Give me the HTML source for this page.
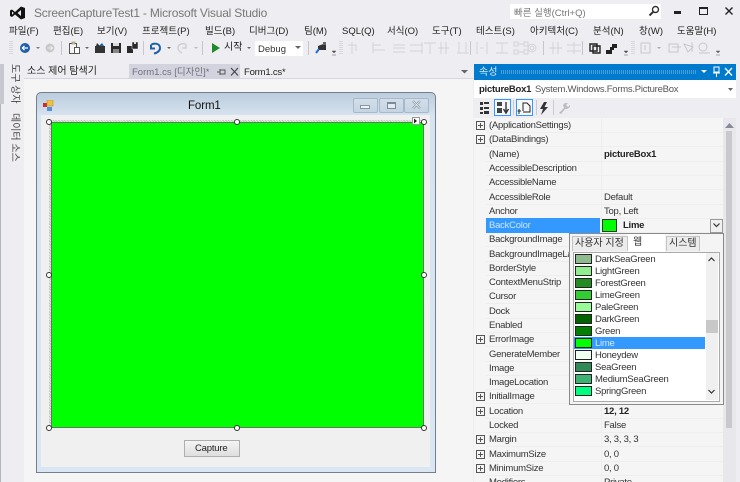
<!DOCTYPE html>
<html><head><meta charset="utf-8"><style>
html,body{margin:0;padding:0}
body{width:740px;height:482px;overflow:hidden;background:#eeeef2}
#r{position:relative;width:740px;height:482px;overflow:hidden;background:#eeeef2;font:10px "Liberation Sans","Noto Sans CJK KR",sans-serif;color:#1e1e1e;filter:blur(.3px)}
.b{position:absolute}
.t{position:absolute;white-space:nowrap;line-height:14px;height:14px}
.p{color:#333;font-size:9.500px;letter-spacing:-.25px;left:489px}
.v{color:#333;font-size:9.500px;letter-spacing:-.25px;left:604px}
.e{position:absolute;left:476px;width:7px;height:7px;border:1px solid #555;background:linear-gradient(#555,#555) center/5px 1px no-repeat,linear-gradient(#555,#555) center/1px 5px no-repeat,#f5f5f5}
.l{position:absolute;left:486px;width:237px;height:1px;background:#eeeeee}
.s{position:absolute;left:575px;width:15px;height:8px;border:1px solid #222}
.c{position:absolute;left:595px;white-space:nowrap;line-height:12px;font-size:9.500px;letter-spacing:-.25px;color:#333}
.h{position:absolute;width:4px;height:4px;border:1px solid #333;border-radius:50%;background:#fff}
.cb{position:absolute;top:98px;height:13px;width:23px;border:1px solid #a9b8c9;border-radius:2px;background:linear-gradient(#d2dee9,#c5d4e3)}
.m{font-size:9.500px;color:#1e1e1e;top:25px}
</style></head><body><div id="r">

<!-- title bar -->
<svg class="b" style="left:9px;top:6px" width="17" height="14" viewBox="0 0 17 14"><path d="M1 4.500L3 3.500L6 6L12 .5L16 2V12L12 13.500L6 8.500L3 11L1 10ZM3 5.500V8.700L4.800 7ZM12 4L8.500 7L12 10Z" fill="#111" fill-rule="evenodd"/></svg>
<div class="t" style="left:34px;top:6px;font-size:12px;letter-spacing:-.2px;color:#777">ScreenCaptureTest1 - Microsoft Visual Studio</div>
<div class="b" style="left:510px;top:4px;width:151px;height:15px;background:#fff"></div>
<div class="t" style="left:514px;top:7px;font-size:9.500px;color:#777">빠른 실행(Ctrl+Q)</div>
<svg class="b" style="left:648px;top:5px" width="12" height="12" viewBox="0 0 12 12"><circle cx="7.500" cy="4.500" r="3" fill="none" stroke="#333" stroke-width="1.400"/><path d="M5.200 6.800L1.500 10.500" stroke="#333" stroke-width="2"/></svg>
<div class="b" style="left:674px;top:11px;width:7px;height:3px;background:#222"></div>
<div class="b" style="left:699px;top:7px;width:7px;height:5px;border:1px solid #222;border-top-width:2px"></div>
<svg class="b" style="left:724px;top:6px" width="10" height="10" viewBox="0 0 10 10"><path d="M1.500 1.500L8.500 8.500M8.500 1.500L1.500 8.500" stroke="#222" stroke-width="1.400"/></svg>

<!-- menu -->
<div class="t m" style="left:9px">파일(F)</div>
<div class="t m" style="left:53px">편집(E)</div>
<div class="t m" style="left:97px">보기(V)</div>
<div class="t m" style="left:142px">프로젝트(P)</div>
<div class="t m" style="left:205px">빌드(B)</div>
<div class="t m" style="left:249px">디버그(D)</div>
<div class="t m" style="left:304px">팀(M)</div>
<div class="t m" style="left:342px">SQL(Q)</div>
<div class="t m" style="left:387px">서식(O)</div>
<div class="t m" style="left:432px">도구(T)</div>
<div class="t m" style="left:476px">테스트(S)</div>
<div class="t m" style="left:530px">아키텍처(C)</div>
<div class="t m" style="left:593px">분석(N)</div>
<div class="t m" style="left:639px">창(W)</div>
<div class="t m" style="left:677px">도움말(H)</div>

<!-- toolbar -->
<svg class="b" style="left:0;top:38px" width="740" height="20" viewBox="0 38 740 20">
<g fill="none" stroke="#c6c6cc"><path d="M61.500 41V55M143.500 41V55M202.500 41V55M308.500 41V55M470.500 41V55M543.500 41V55M582.500 41V55"/></g>
<path d="M10 41V55M12 41V55M340 41V55M342 41V55M632 41V55M634 41V55" stroke="#c4c4c8" stroke-dasharray="1 1"/>
<circle cx="25" cy="48" r="5" fill="#1e5fa8"/><path d="M28 48H22.500M24.500 45.800L22.300 48L24.500 50.200" stroke="#fff" fill="none" stroke-width="1.200"/>
<path d="M36 47H40L38 49Z" fill="#777"/>
<circle cx="50" cy="48" r="4.500" fill="#c8c8c8"/><path d="M47.500 48H52M50.500 46L52.500 48L50.500 50" stroke="#eee" fill="none"/>
<path d="M69.500 43.500H76.500V53.500H69.500Z" fill="#f4f4f4" stroke="#555"/><path d="M72 42H75V44H72Z" fill="#e8c888" stroke="#777" stroke-width=".600"/><path d="M74.500 47.500H79.500V53.500H74.500Z" fill="#fff" stroke="#555"/>
<path d="M85 47H89L87 49Z" fill="#666"/>
<path d="M95 46H105V53H95Z" fill="#333"/><path d="M97 43L100 46H96Z" fill="#333"/><path d="M102 43L99 46H104Z" fill="#1e5fa8"/>
<path d="M111 43H121V53H111Z" fill="#2a2a2a"/><path d="M113 43H119V46H113Z" fill="#ddd"/><path d="M113 49H119V53H113Z" fill="#888"/>
<path d="M127 46H133V53H127Z" fill="#2a2a2a"/><path d="M132 42H138V49H132Z" fill="#2a2a2a" stroke="#eee" stroke-width=".500"/><path d="M134 42H136V44H134Z" fill="#ddd"/>
<path d="M151 44.500L151 48.500H155M151.500 44.500C154 43 160 43 160 48C160 51 157 53 154 53.500" stroke="#1e5fa8" fill="none" stroke-width="2"/>
<path d="M167 47H171L169 49Z" fill="#666"/>
<path d="M186 44V48H182M185.500 44C183 43 178 44 178 48C178 50 180 52 182 53" stroke="#d0d0d0" fill="none" stroke-width="1.500"/>
<path d="M194 47H198L196 49Z" fill="#bbb"/>
<path d="M212 43L220 48L212 53Z" fill="#1f8a2c"/>
<path d="M247 47H251L249 49Z" fill="#666"/>
<path d="M318 46L326 43V50H318Z" fill="#333"/><path d="M323 42H326V45H323Z" fill="#666"/><path d="M319 49L316 53" stroke="#1e6fd0" stroke-width="2" fill="none"/>
<path d="M332 51H336L334 53ZM332 55H336" fill="#555" stroke="#555" stroke-width=".500"/>
<g stroke="#d4d4d8" fill="none"><path d="M352 42V54M348 45H356V51"/><path d="M373 42V53M373 45H381M373 50H385"/><path d="M393 45H405M393 48H405M393 52H405"/><path d="M410 45H422M410 51H422M422 42V54"/><path d="M424 43H436M430 43V54"/><path d="M441 42V54M446 42V54M438 48H449"/><path d="M457 53H469M459 42V53M466 42V53"/><path d="M477 42V54M487 42V54M480 48H484"/><path d="M496 43H508M496 53H508M502 43V53"/><path d="M514 42H518V46H514ZM524 42H528V46H524ZM514 50H518V54H514ZM524 50H528V54H524ZM518 44H524M518 52H524"/><circle cx="532" cy="48" r="4"/><circle cx="532" cy="48" r="2"/><path d="M553 42V54M558 42V54M549 48H562"/><path d="M567 45H581M567 51H581M574 42V54"/></g>
<path d="M590 44H597V51H590ZM593 46H600V53H593Z" fill="none" stroke="#222" stroke-width="1.400"/><path d="M606 50H612V54H606ZM612 44H617V48H612ZM610 47H614V50H610Z" fill="#222"/>
<path d="M624 51H628L626 53ZM624 55H628" fill="#555" stroke="#555" stroke-width=".500"/>
<g stroke="#c8c8cc" fill="none"><path d="M641 43H650V53H641Z"/><path d="M645 45V50"/><path d="M669 44H678V52H669ZM672 47H681"/><path d="M684 44L693 47L688 52ZM692 42V52"/><circle cx="703" cy="47" r="4"/><path d="M699 53H710"/></g>
<path d="M657 47H661L659 49Z" fill="#aaa"/><path d="M716 51H720L718 53ZM716 55H720" fill="#666" stroke="#666" stroke-width=".500"/>
</svg>
<div class="t" style="left:224px;top:41px;font-size:10px">시작</div>
<div class="b" style="left:255px;top:41px;width:48px;height:15px;background:#fff"></div>
<div class="t" style="left:258px;top:43px;font-size:9.500px;color:#333">Debug</div>
<svg class="b" style="left:295px;top:46px" width="6" height="4"><path d="M0 0H6L3 3Z" fill="#666"/></svg>

<!-- left tabs -->
<div class="b" style="left:0;top:64px;width:4px;height:40px;background:#c8c8d0"></div>
<div class="b" style="left:0;top:104px;width:1px;height:378px;background:#b4b4bc"></div>
<div class="t" style="left:7px;top:64px;font-size:10px;color:#444;writing-mode:vertical-rl;text-orientation:sideways;height:auto;line-height:14px;width:14px">도구 상자</div>
<div class="t" style="left:7px;top:113px;font-size:10px;color:#444;writing-mode:vertical-rl;text-orientation:sideways;height:auto;line-height:14px;width:14px">데이터 소스</div>

<!-- doc area -->
<div class="b" style="left:24px;top:79px;width:449px;height:403px;background:#f5f5f5"></div>
<div class="b" style="left:24px;top:78px;width:449px;height:1px;background:#d6d6e0"></div>
<div class="t" style="left:27px;top:65px;font-size:10px;color:#222">소스 제어 탐색기</div>
<div class="b" style="left:129px;top:64px;width:111px;height:15px;background:#d2d3de"></div>
<div class="t" style="left:132px;top:66px;font-size:9.500px;color:#71717b">Form1.cs [디자인]*</div>
<svg class="b" style="left:216px;top:67px" width="24" height="10" viewBox="0 0 24 10"><path d="M1 5H4M4 3H9V7H4ZM4 2V8" stroke="#555" fill="none"/><path d="M15 1L22 8.500M22 1L15 8.500" stroke="#444" stroke-width="1.200"/></svg>
<div class="t" style="left:244px;top:66px;font-size:9.500px;letter-spacing:-.2px;color:#222">Form1.cs*</div>
<svg class="b" style="left:461px;top:70px" width="7" height="4"><path d="M0 0H7L3.500 3.500Z" fill="#666"/></svg>

<!-- form -->
<div class="b" style="left:36px;top:92px;width:398px;height:379px;border:1px solid #757f8c;border-radius:5px 5px 0 0;background:linear-gradient(#bccddd 0,#d6e3f0 22px,#dae6f3 100%)"></div>
<div class="b" style="left:41px;top:115px;width:389px;height:352px;background:#f0f0f0"></div>
<svg class="b" style="left:43px;top:100px" width="11" height="11" viewBox="0 0 11 11"><rect x="0" y="3" width="4" height="4" fill="#c83030"/><rect x="4" y="0" width="6" height="6" fill="#f0c040" stroke="#b08820" stroke-width=".500"/><rect x="4" y="7" width="5" height="4" fill="#5a90d8"/></svg>
<div class="t" style="left:188px;top:99px;font-size:11.500px;letter-spacing:-.1px;color:#111">Form1</div>
<div class="cb" style="left:353px"></div><div class="cb" style="left:379px"></div><div class="cb" style="left:404px"></div>
<div class="b" style="left:360px;top:105px;width:8px;height:2px;border:1px solid #8795a5;background:#eef2f6"></div>
<div class="b" style="left:387px;top:102px;width:7px;height:4px;border:1px solid #7d8b9b;border-top-width:2px;background:#e4ebf2"></div>
<svg class="b" style="left:411px;top:100px" width="11" height="10"><path d="M2 1L9 8.500M9 1L2 8.500" stroke="#8c9aaa" stroke-width="2.200"/><path d="M2 1L9 8.500M9 1L2 8.500" stroke="#e6edf3" stroke-width=".800"/></svg>

<!-- picture box -->
<div class="b" style="left:49px;top:120px;width:375px;height:308px;background:repeating-linear-gradient(45deg,#c0c0c0 0 1px,#ececec 1px 2px)"></div>
<div class="b" style="left:51px;top:122px;width:371px;height:304px;background:#0f0;border:1px solid #5b7b5b"></div>
<div class="h" style="left:46px;top:119px"></div><div class="h" style="left:234px;top:119px"></div><div class="h" style="left:421px;top:119px"></div>
<div class="h" style="left:46px;top:272px"></div><div class="h" style="left:421px;top:272px"></div>
<div class="h" style="left:46px;top:425px"></div><div class="h" style="left:234px;top:425px"></div><div class="h" style="left:421px;top:425px"></div>
<div class="b" style="left:412px;top:117px;width:6px;height:6px;border:1px solid #999;background:#fff"></div>
<svg class="b" style="left:414px;top:118px" width="4" height="6"><path d="M0 .5L3 3L0 5.500Z" fill="#222"/></svg>
<div class="b" style="left:184px;top:440px;width:54px;height:15px;border:1px solid #aeaeae;background:linear-gradient(#f4f4f4,#dedede)"></div>
<div class="t" style="left:195px;top:442px;font-size:9.500px;letter-spacing:-.2px;color:#222">Capture</div>

<!-- properties -->
<div class="b" style="left:474px;top:64px;width:262px;height:16px;background:#007acc"></div>
<div class="t" style="left:479px;top:66px;font-size:10px;color:#dbeaf6">속성</div>
<div class="b" style="left:501px;top:70px;width:196px;height:4px;background:repeating-linear-gradient(90deg,#4a9fd9 0 1px,#007acc 1px 2px)"></div>
<svg class="b" style="left:700px;top:66px" width="36" height="12" viewBox="0 0 36 12"><path d="M1 4H7L4 7Z" fill="#fff"/><path d="M14 1H19V6H14ZM13 7H20M16.500 7V11" stroke="#fff" fill="none"/><path d="M25 2L32 9.500M32 2L25 9.500" stroke="#fff" stroke-width="1.300"/></svg>
<div class="b" style="left:474px;top:80px;width:262px;height:18px;background:#fff"></div>
<div class="t" style="left:479px;top:83px;font-size:9.500px;letter-spacing:-.25px;font-weight:bold;color:#222">pictureBox1</div>
<div class="t" style="left:535px;top:83px;font-size:9.500px;letter-spacing:-.25px;color:#555">System.Windows.Forms.PictureBox</div>
<svg class="b" style="left:728px;top:88px" width="5" height="3"><path d="M0 0H5L2.500 3Z" fill="#666"/></svg>
<svg class="b" style="left:474px;top:98px" width="110" height="20" viewBox="474 98 110 20">
<rect x="494.500" y="99.500" width="16" height="16" fill="#f8f8fc" stroke="#3399ff"/><rect x="516.500" y="99.500" width="16" height="16" fill="#f8f8fc" stroke="#3399ff"/>
<path d="M480 102H483V105H480ZM480 107H483V110H480ZM480 112H483V114H480ZM484 102H489V104H484ZM484 107H489V109H484ZM484 111H489V114H484Z" fill="#333"/>
<path d="M497 102H502V106H497ZM497 108H502V113H497Z" fill="#444"/><path d="M506 102V112M503.500 109L506 113L508.500 109" stroke="#333" fill="none" stroke-width="1.400"/>
<path d="M519 109V114M517.500 111H521M523 111V103H527L530 106V112H523" stroke="#222" fill="none"/>
<path d="M544 102L540 109H543L541 115L548 107H544.500L547 102Z" fill="#333"/>
<path d="M553.500 100V115" stroke="#ccc"/><path d="M559 113L564 108L563 105L565 103L568 103L566 105L568 107L570 105L570 107L567 109L565 109L561 114Z" fill="#bdbdbd"/>
<path d="M536.500 100V115M513.500 100V115" stroke="#ccc"/>
</svg>

<!-- grid -->
<div class="b" style="left:474px;top:118px;width:249px;height:364px;background:#f5f5f5"></div>
<div class="b" style="left:601px;top:118px;width:1px;height:364px;background:#eee"></div>
<div class="l" style="top:132px"></div><div class="l" style="top:146px"></div><div class="l" style="top:161px"></div><div class="l" style="top:175px"></div><div class="l" style="top:189px"></div><div class="l" style="top:204px"></div><div class="l" style="top:218px"></div><div class="l" style="top:232px"></div><div class="l" style="top:246px"></div><div class="l" style="top:261px"></div><div class="l" style="top:275px"></div><div class="l" style="top:289px"></div><div class="l" style="top:303px"></div><div class="l" style="top:318px"></div><div class="l" style="top:332px"></div><div class="l" style="top:346px"></div><div class="l" style="top:361px"></div><div class="l" style="top:375px"></div><div class="l" style="top:389px"></div><div class="l" style="top:403px"></div><div class="l" style="top:418px"></div><div class="l" style="top:432px"></div><div class="l" style="top:446px"></div><div class="l" style="top:461px"></div><div class="l" style="top:475px"></div>

<div class="e" style="top:121px"></div><div class="t p" style="top:119px">(ApplicationSettings)</div>
<div class="e" style="top:135px"></div><div class="t p" style="top:133px">(DataBindings)</div>
<div class="t p" style="top:148px">(Name)</div><div class="t v" style="top:148px;font-weight:bold;color:#222">pictureBox1</div>
<div class="t p" style="top:162px">AccessibleDescription</div>
<div class="t p" style="top:176px">AccessibleName</div>
<div class="t p" style="top:191px">AccessibleRole</div><div class="t v" style="top:191px">Default</div>
<div class="t p" style="top:205px">Anchor</div><div class="t v" style="top:205px">Top, Left</div>
<div class="b" style="left:486px;top:218px;width:114px;height:15px;background:#3399ff"></div>
<div class="t p" style="top:219px;color:#cfe4ff">BackColor</div>
<div class="b" style="left:602px;top:219px;width:13px;height:11px;background:#0f0;border:1px solid #333"></div>
<div class="t v" style="left:623px;top:219px;font-weight:bold;color:#222">Lime</div>
<div class="b" style="left:710px;top:219px;width:11px;height:12px;border:1px solid #9a9a9a;background:#f0f0f0"></div>
<svg class="b" style="left:713px;top:223px" width="7" height="5"><path d="M.5 .5L3.500 3.500L6.500 .5" stroke="#333" fill="none" stroke-width="1.200"/></svg>
<div class="t p" style="top:233px">BackgroundImage</div>
<div class="t p" style="top:248px">BackgroundImageLayout</div>
<div class="t p" style="top:262px">BorderStyle</div>
<div class="t p" style="top:276px">ContextMenuStrip</div>
<div class="t p" style="top:290px">Cursor</div>
<div class="t p" style="top:305px">Dock</div>
<div class="t p" style="top:319px">Enabled</div>
<div class="e" style="top:335px"></div><div class="t p" style="top:333px">ErrorImage</div>
<div class="t p" style="top:348px">GenerateMember</div>
<div class="t p" style="top:362px">Image</div>
<div class="t p" style="top:376px">ImageLocation</div>
<div class="e" style="top:392px"></div><div class="t p" style="top:390px">InitialImage</div>
<div class="e" style="top:407px"></div><div class="t p" style="top:405px">Location</div><div class="t v" style="top:405px;font-weight:bold;color:#222">12, 12</div>
<div class="t p" style="top:419px">Locked</div><div class="t v" style="top:419px">False</div>
<div class="e" style="top:435px"></div><div class="t p" style="top:433px">Margin</div><div class="t v" style="top:433px">3, 3, 3, 3</div>
<div class="e" style="top:450px"></div><div class="t p" style="top:448px">MaximumSize</div><div class="t v" style="top:448px">0, 0</div>
<div class="e" style="top:464px"></div><div class="t p" style="top:462px">MinimumSize</div><div class="t v" style="top:462px">0, 0</div>
<div class="t p" style="top:476px">Modifiers</div><div class="t v" style="top:476px">Private</div>

<!-- scrollbar -->
<div class="b" style="left:723px;top:118px;width:13px;height:364px;background:#e8e8ec"></div>
<div class="b" style="left:726px;top:131px;width:6px;height:297px;background:#c8c8cd"></div>
<svg class="b" style="left:725px;top:123px" width="9" height="5"><path d="M0 5L4.500 0L9 5Z" fill="#868999"/></svg>

<!-- color popup -->
<div class="b" style="left:569px;top:233px;width:153px;height:170px;border:1px solid #8a8a8a;background:#f4f4f4"></div>
<div class="b" style="left:627px;top:234px;width:38px;height:18px;background:#fff"></div>
<div class="b" style="left:572px;top:236px;width:54px;height:14px;border:1px solid #c4c4c4;border-bottom:0;background:#ececec"></div>
<div class="b" style="left:666px;top:236px;width:32px;height:14px;border:1px solid #c4c4c4;border-bottom:0;background:#ececec"></div>
<div class="t" style="left:575px;top:237px;font-size:10px;color:#333">사용자 지정</div>
<div class="t" style="left:633px;top:236px;font-size:10px;color:#333">웹</div>
<div class="t" style="left:669px;top:237px;font-size:10px;color:#333">시스템</div>
<div class="b" style="left:573px;top:252px;width:145px;height:148px;border:1px solid #aaa;background:#fff"></div>
<div class="b" style="left:706px;top:253px;width:12px;height:147px;background:#f0f0f0"></div>
<div class="b" style="left:706px;top:320px;width:12px;height:13px;background:#c8c8c8"></div>
<svg class="b" style="left:708px;top:257px" width="7" height="5"><path d="M.5 4L3.500 1L6.500 4" stroke="#333" fill="none" stroke-width="1.200"/></svg>
<svg class="b" style="left:708px;top:389px" width="7" height="5"><path d="M.5 1L3.500 4L6.500 1" stroke="#333" fill="none" stroke-width="1.200"/></svg>
<div class="b" style="left:574px;top:337px;width:131px;height:12px;background:#3399ff"></div>
<div class="s" style="top:254px;background:#8fbc8f"></div><div class="c" style="top:254px">DarkSeaGreen</div>
<div class="s" style="top:266px;background:#90ee90"></div><div class="c" style="top:266px">LightGreen</div>
<div class="s" style="top:278px;background:#228b22"></div><div class="c" style="top:278px">ForestGreen</div>
<div class="s" style="top:290px;background:#32cd32"></div><div class="c" style="top:290px">LimeGreen</div>
<div class="s" style="top:302px;background:#98fb98"></div><div class="c" style="top:302px">PaleGreen</div>
<div class="s" style="top:314px;background:#006400"></div><div class="c" style="top:314px">DarkGreen</div>
<div class="s" style="top:326px;background:#008000"></div><div class="c" style="top:326px">Green</div>
<div class="s" style="top:338px;background:#0f0"></div><div class="c" style="top:338px;color:#d8e8ff">Lime</div>
<div class="s" style="top:350px;background:#f0fff0"></div><div class="c" style="top:350px">Honeydew</div>
<div class="s" style="top:362px;background:#2e8b57"></div><div class="c" style="top:362px">SeaGreen</div>
<div class="s" style="top:374px;background:#3cb371"></div><div class="c" style="top:374px">MediumSeaGreen</div>
<div class="s" style="top:386px;background:#00ff7f"></div><div class="c" style="top:386px">SpringGreen</div>

</div></body></html>
